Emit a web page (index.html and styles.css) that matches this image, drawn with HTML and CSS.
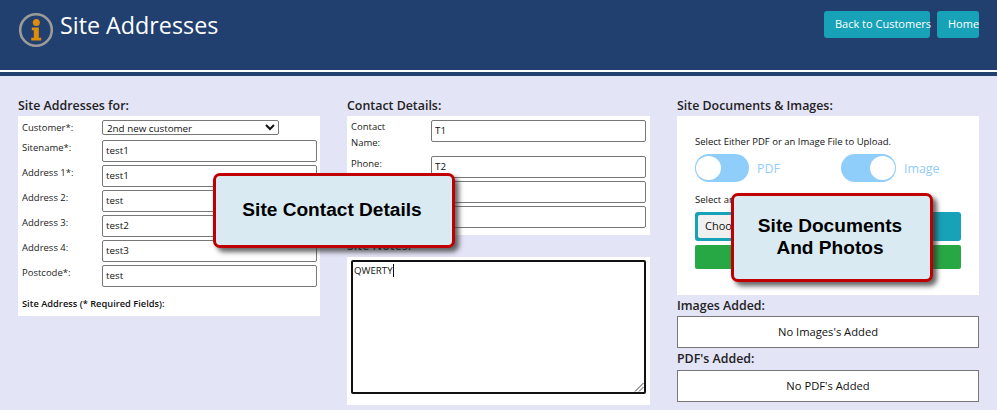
FILE: index.html
```html
<!DOCTYPE html>
<html lang="en">
<head>
<meta charset="utf-8">
<title>Site Addresses</title>
<link rel="stylesheet" href="styles.css">
</head>
<body>
<header class="topbar">
  <div class="brand">
    <svg class="info" width="36" height="36" viewBox="0 0 36 36" aria-hidden="true">
      <circle cx="18" cy="18" r="15.8" fill="none" stroke="#9b9b98" stroke-width="2.6"/>
      <circle cx="18.3" cy="10.6" r="3.5" fill="#e08c0b"/>
      <path d="M13.8 15.6h7v10.2h2.4v2.6H13.2v-2.6h2.6v-7.6h-2z" fill="#e08c0b"/>
    </svg>
    <h1>Site Addresses</h1>
  </div>
  <nav class="nav">
    <a class="nav-btn nav-back">Back to Customers</a>
    <a class="nav-btn nav-home">Home</a>
  </nav>
</header>
<div class="rule"></div>
<main class="columns">
  <section class="col">
    <h2>Site Addresses for:</h2>
    <div class="panel panel-address">
      <div class="row row-select"><label>Customer*:</label>
        <select class="select"><option>2nd new customer</option></select></div>
      <div class="row"><label>Sitename*:</label><input class="field" value="test1"></div>
      <div class="row"><label>Address 1*:</label><input class="field" value="test1"></div>
      <div class="row"><label>Address 2:</label><input class="field" value="test"></div>
      <div class="row"><label>Address 3:</label><input class="field" value="test2"></div>
      <div class="row"><label>Address 4:</label><input class="field" value="test3"></div>
      <div class="row"><label>Postcode*:</label><input class="field" value="test"></div>
      <p class="required">Site Address (* Required Fields):</p>
    </div>
  </section>
  <section class="col">
    <h2>Contact Details:</h2>
    <div class="panel panel-contact">
      <div class="row row-name"><label>Contact<br>Name:</label><input class="field" value="T1"></div>
      <div class="row"><label>Phone:</label><input class="field" value="T2"></div>
      <div class="row"><input class="field field-wide"></div>
      <div class="row"><input class="field field-wide"></div>
    </div>
    <h2 class="notes-head">Site Notes:</h2>
    <div class="panel panel-notes">
      <div class="notes"><span class="notes-text">QWERTY</span><span class="caret"></span>
        <svg class="grip" width="10" height="10" viewBox="0 0 10 10" aria-hidden="true"><path d="M1 9.5 9.5 1M5 9.5 9.5 5" stroke="#444" fill="none"/></svg>
      </div>
    </div>
  </section>
  <section class="col">
    <h2>Site Documents &amp; Images:</h2>
    <div class="panel panel-docs">
      <p class="hint">Select Either PDF or an Image File to Upload.</p>
      <div class="toggles">
        <div class="toggle-item"><span class="toggle"><span class="knob"></span></span><span class="toggle-label">PDF</span></div>
        <div class="toggle-item"><span class="toggle toggle-on"><span class="knob"></span></span><span class="toggle-label">Image</span></div>
      </div>
      <p class="hint hint-file">Select an</p>
      <div class="file-bar"><span class="file-btn">Choose</span></div>
      <div class="upload-bar"></div>
    </div>
    <h2 class="added-head">Images Added:</h2>
    <div class="added">No Images's Added</div>
    <h2 class="added-head added-head-2">PDF's Added:</h2>
    <div class="added">No PDF's Added</div>
  </section>
</main>
<aside class="callout callout-contact">Site Contact Details</aside>
<aside class="callout callout-docs">Site Documents<br>And Photos</aside>
</body>
</html>
```
FILE: styles.css
```css
* { box-sizing: border-box; }
html, body { margin: 0; height: 410px; overflow: hidden; }
body {
  position: relative;
  background: #e4e4f7;
  font-family: "Open Sans", "Noto Sans", sans-serif;
  color: #111;
}
.topbar {
  height: 70px;
  background: #21406f;
  display: flex;
  justify-content: space-between;
  padding: 11px 18px 0 18px;
}
.brand { display: flex; align-items: flex-start; }
.info { margin-top: 1px; flex: none; }
.brand h1 {
  margin: 0 0 0 6px;
  font-size: 23.3px;
  line-height: 28px;
  font-weight: 400;
  color: #fff;
}
.nav { display: flex; gap: 7px; }
.nav-btn {
  height: 27px;
  background: #17a2b8;
  border-radius: 3px;
  color: #fff;
  font-size: 11px;
  line-height: 26px;
  padding-left: 11px;
  white-space: nowrap;
}
.nav-back { width: 106px; }
.nav-home { width: 42px; }
.rule { height: 6px; border-top: 2px solid #fff; background: #21406f; }
.columns {
  display: grid;
  grid-template-columns: 302px 303px 302px;
  column-gap: 27px;
  padding: 20px 18px 0;
}
h2 {
  margin: 0;
  height: 20px;
  font-size: 12.4px;
  line-height: 20px;
  font-weight: 600;
  color: #222;
}
.panel { background: #fff; }
.panel-address { height: 200px; padding: 4px 3px 0 4px; }
.panel-contact { height: 119px; padding: 4px 4px 0 4px; }
.row {
  display: grid;
  grid-template-columns: 80px 215px;
  height: 25px;
}
.row label { font-size: 9.5px; line-height: 15px; color: #222; }
.row-select { height: 20px; }
.row-name { height: 36px; }
.row-name label { line-height: 16px; margin-top: -1px; }
.field {
  width: 215px;
  height: 21.5px;
  border: 1px solid #777;
  border-radius: 2px;
  background: #fff;
  padding: 0 3px 1px;
  font: 9.8px "Open Sans", sans-serif;
  color: #111;
}
.field-wide { grid-column: 2; }
.select {
  width: 177px;
  height: 15px;
  border: 1px solid #777;
  border-radius: 2px;
  background: #fff;
  padding: 0 0 1px;
  font: 9.8px "Open Sans", sans-serif;
  color: #111;
}
.required { margin: 6px 0 0; font-size: 9.3px; line-height: 16px; font-weight: 600; color: #111; }
.notes-head { margin-top: 1px; }
.panel-notes { height: 148px; padding: 3px 4px 0; margin-top: 1px; }
.notes {
  position: relative;
  height: 134px;
  border: 2px solid #111;
  border-radius: 2px;
  padding: 2px 1px;
  font-size: 9.7px;
  line-height: 14px;
  display: flex;
  align-items: flex-start;
}
.caret { width: 1px; height: 13px; background: #111; }
.grip { position: absolute; right: 0; bottom: 0; }
.panel-docs { height: 179px; padding: 18px 18px 0; }
.hint { margin: 0; font-size: 9.5px; line-height: 16px; color: #111; }
.toggles { display: flex; margin-top: 4px; }
.toggle-item { flex: none; width: 146px; display: flex; align-items: center; gap: 8px; }
.toggle-item + .toggle-item { width: 120px; }
.toggle {
  width: 54px;
  height: 28px;
  border-radius: 14px;
  background: #8fcdfb;
  padding: 2px 1px;
  display: flex;
}
.toggle-on { justify-content: flex-end; width: 55px; }
.knob { width: 25px; height: 24px; border-radius: 50%; background: #fff; }
.toggle-label { font-size: 12.4px; color: #92cdf9; }
.hint-file { margin-top: 10px; }
.file-bar {
  margin-top: 4px;
  height: 29px;
  background: #17a2b8;
  border-radius: 3px;
  padding: 3px;
}
.file-btn {
  display: block;
  width: 100px;
  height: 23px;
  background: #f0f0f0;
  border-radius: 2px;
  font-size: 11px;
  line-height: 22px;
  padding-left: 7px;
}
.upload-bar { margin-top: 4px; height: 24px; background: #28a745; border-radius: 2px; }
.added-head { margin-top: 1px; }
.added-head-2 { margin-top: 1px; height: 21px; }
.added {
  height: 32px;
  border: 1px solid #777;
  background: #fff;
  font-size: 11.2px;
  line-height: 30px;
  text-align: center;
  color: #111;
}
.callout {
  position: absolute;
  display: flex;
  align-items: center;
  justify-content: center;
  text-align: center;
  background: #daeaf2;
  border: 3px solid #c00000;
  border-radius: 7px;
  box-shadow: 4px 4px 5px rgba(50, 50, 50, .75);
  padding: 0 4px 2px 0;
  font-family: "Liberation Sans", Arial, sans-serif;
  font-weight: 700;
  font-size: 19.1px;
  line-height: 22px;
  color: #000;
}
.callout-contact { left: 213px; top: 173px; width: 242px; height: 75px; }
.callout-docs { left: 731px; top: 193px; width: 202px; height: 89px; }
```
